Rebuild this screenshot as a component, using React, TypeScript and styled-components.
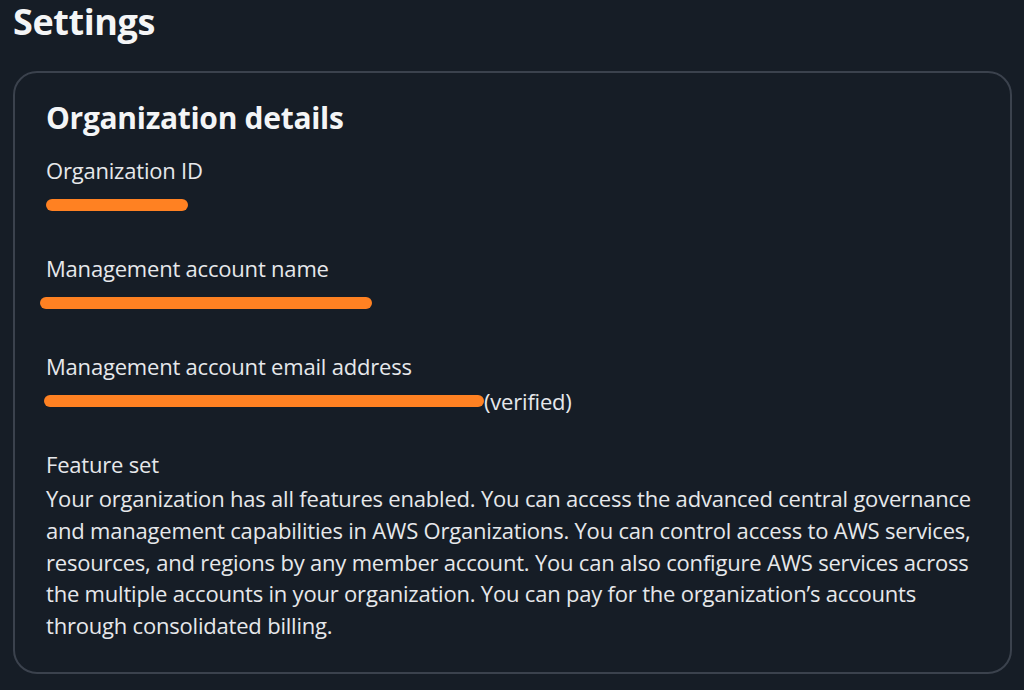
import React from 'react';
import styled, { createGlobalStyle } from 'styled-components';

const GlobalStyle = createGlobalStyle`
  html, body {
    margin: 0;
    padding: 0;
    background: #161d26;
  }

  body {
    font-family: 'Open Sans', 'Noto Sans', sans-serif;
    color: #e6e8eb;
  }
`;

const Styles = {
  Page: styled.div`
    width: 1024px;
    height: 690px;
    overflow: hidden;
    padding: 5px 12px 0 13px;
    box-sizing: border-box;
  `,
  Title: styled.h1`
    font-size: 36px;
    font-weight: 700;
    line-height: 34px;
    margin: 0 0 32px;
    color: #f4f5f6;
    letter-spacing: -0.4px;
  `,
  Card: styled.section`
    border: 2px solid #3b424d;
    border-radius: 24px;
    padding: 24px 30px 30px 31px;
    background: #161d26;
  `,
  Heading: styled.h2`
    font-size: 30px;
    font-weight: 700;
    line-height: 42px;
    margin: 0 0 15px;
    color: #f4f5f6;
    letter-spacing: -0.3px;
  `,
  Item: styled.div`
    margin-bottom: 30px;

    &:last-child {
      margin-bottom: 0;
    }
  `,
  Label: styled.div`
    font-size: 22px;
    line-height: 32px;
    letter-spacing: -0.2px;
  `,
  Value: styled.div`
    font-size: 22px;
    line-height: 34px;
    min-height: 34px;
    padding-top: 2px;
    display: flex;
    align-items: center;
    letter-spacing: -0.2px;
  `,
  Redacted: styled.span<{ $width: number; $shift?: number }>`
    display: inline-block;
    width: ${(p) => p.$width}px;
    height: 12px;
    margin-left: ${(p) => p.$shift ?? 0}px;
    border-radius: 6px;
    background: #ff8122;
  `,
  Body: styled.p`
    font-size: 22px;
    line-height: 31.75px;
    margin: 3px 0 0;
    letter-spacing: -0.2px;
  `,
};

const App = () => {
  return (
    <>
      <GlobalStyle />
      <Styles.Page>
        <Styles.Title>Settings</Styles.Title>

        <Styles.Card>
          <Styles.Heading>Organization details</Styles.Heading>

          <Styles.Item>
            <Styles.Label>Organization ID</Styles.Label>
            <Styles.Value>
              <Styles.Redacted $width={142} />
            </Styles.Value>
          </Styles.Item>

          <Styles.Item>
            <Styles.Label>Management account name</Styles.Label>
            <Styles.Value>
              <Styles.Redacted $width={332} $shift={-6} />
            </Styles.Value>
          </Styles.Item>

          <Styles.Item>
            <Styles.Label>Management account email address</Styles.Label>
            <Styles.Value>
              <Styles.Redacted $width={440} $shift={-2} />
              <span>(verified)</span>
            </Styles.Value>
          </Styles.Item>

          <Styles.Item>
            <Styles.Label>Feature set</Styles.Label>
            <Styles.Body>
              Your organization has all features enabled. You can access the advanced central governance
              and management capabilities in AWS Organizations. You can control access to AWS services,
              resources, and regions by any member account. You can also configure AWS services across
              the multiple accounts in your organization. You can pay for the organization’s accounts
              through consolidated billing.
            </Styles.Body>
          </Styles.Item>
        </Styles.Card>
      </Styles.Page>
    </>
  );
};

export default App;
